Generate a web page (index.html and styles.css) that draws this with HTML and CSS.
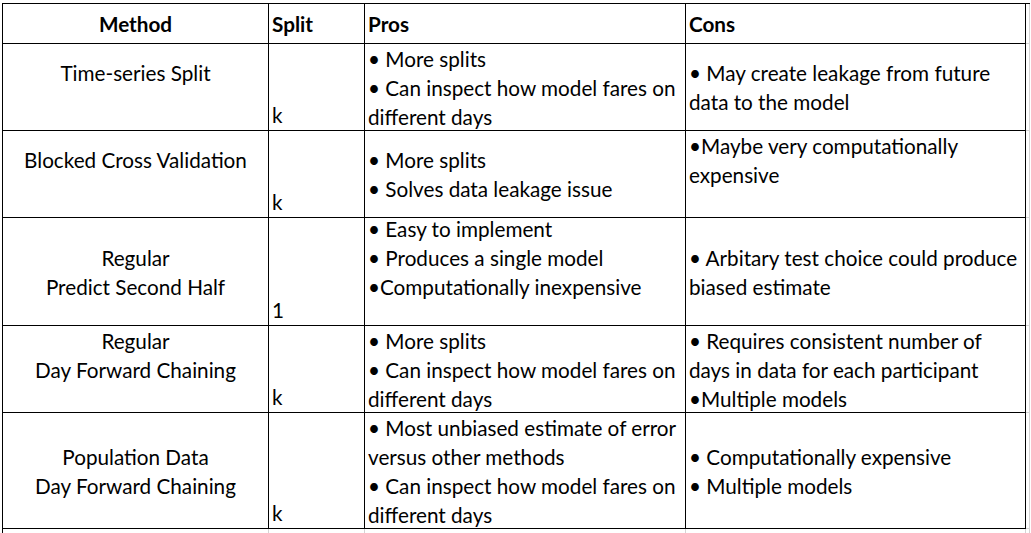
FILE: index.html
```html
<!DOCTYPE html>
<html>
<head>
<meta charset="utf-8">
<link rel="stylesheet" href="styles.css">
</head>
<body>
<div class="sheet">
  <div class="cell head center mid">Method</div>
  <div class="cell head mid">Split</div>
  <div class="cell head mid">Pros</div>
  <div class="cell head mid">Cons</div>
  <div class="cell grid"></div>

  <div class="cell center mid blank-after">Time-series Split</div>
  <div class="cell bottom">k</div>
  <div class="cell top">• More splits<br>• Can inspect how model fares on<br>different days</div>
  <div class="cell mid">• May create leakage from future<br>data to the model</div>
  <div class="cell grid"></div>

  <div class="cell center mid blank-after">Blocked Cross Validation</div>
  <div class="cell bottom">k</div>
  <div class="cell mid">• More splits<br>• Solves data leakage issue</div>
  <div class="cell top">•Maybe very computationally<br>expensive</div>
  <div class="cell grid"></div>

  <div class="cell center mid">Regular<br>Predict Second Half</div>
  <div class="cell bottom">1</div>
  <div class="cell top raised">• Easy to implement<br>• Produces a single model<br>•Computationally inexpensive</div>
  <div class="cell mid">• Arbitary test choice could produce<br>biased estimate</div>
  <div class="cell grid"></div>

  <div class="cell center top">Regular<br>Day Forward Chaining</div>
  <div class="cell bottom">k</div>
  <div class="cell top">• More splits<br>• Can inspect how model fares on<br>different days</div>
  <div class="cell top">• Requires consistent number of<br>days in data for each participant<br>•Multiple models</div>
  <div class="cell grid"></div>

  <div class="cell center mid">Population Data<br>Day Forward Chaining</div>
  <div class="cell bottom">k</div>
  <div class="cell top">• Most unbiased estimate of error<br>versus other methods<br>• Can inspect how model fares on<br>different days</div>
  <div class="cell mid">• Computationally expensive<br>• Multiple models</div>
  <div class="cell grid"></div>

  <div class="cell grid"></div>
  <div class="cell grid"></div>
  <div class="cell grid"></div>
  <div class="cell grid"></div>
  <div class="cell grid"></div>
</div>
</body>
</html>
```

FILE: styles.css
```css
html, body {
  margin: 0;
  padding: 0;
  background: #ffffff;
}

body {
  padding: 3px 0 0 2px;
  font-family: Lato, "Liberation Sans", sans-serif;
  font-size: 20.7px;
  line-height: 29px;
  color: #000000;
  overflow: hidden;
}

.sheet {
  display: grid;
  grid-template-columns: 266px 96px 321px 340px 4px;
  grid-template-rows: 40px 87px 87px 108px 87px 116px 30px;
  border-left: 1px solid #000;
  border-top: 1px solid #000;
  width: max-content;
}

.cell {
  box-sizing: border-box;
  border-right: 1px solid #000;
  border-bottom: 1px solid #000;
  padding: 0 3px;
  white-space: nowrap;
  display: flex;
  flex-direction: column;
  overflow: hidden;
}

.cell.grid {
  border-right-color: #d4d4d4;
  border-bottom-color: #d4d4d4;
  padding: 0;
}

.sheet > .cell:nth-last-child(-n+5) {
  border-bottom-color: #d4d4d4;
}
.sheet > .cell:nth-last-child(-n+5):not(:last-child) {
  border-right-color: #d4d4d4;
}

.head {
  font-weight: bold;
}

.center {
  text-align: center;
}

.top {
  justify-content: flex-start;
  padding-top: 1px;
}

.mid {
  justify-content: center;
  padding-top: 2px;
}

.bottom {
  justify-content: flex-end;
}

.blank-after {
  padding-bottom: 29px;
}

.raised {
  padding-top: 0;
  margin-top: -3px;
}
```
